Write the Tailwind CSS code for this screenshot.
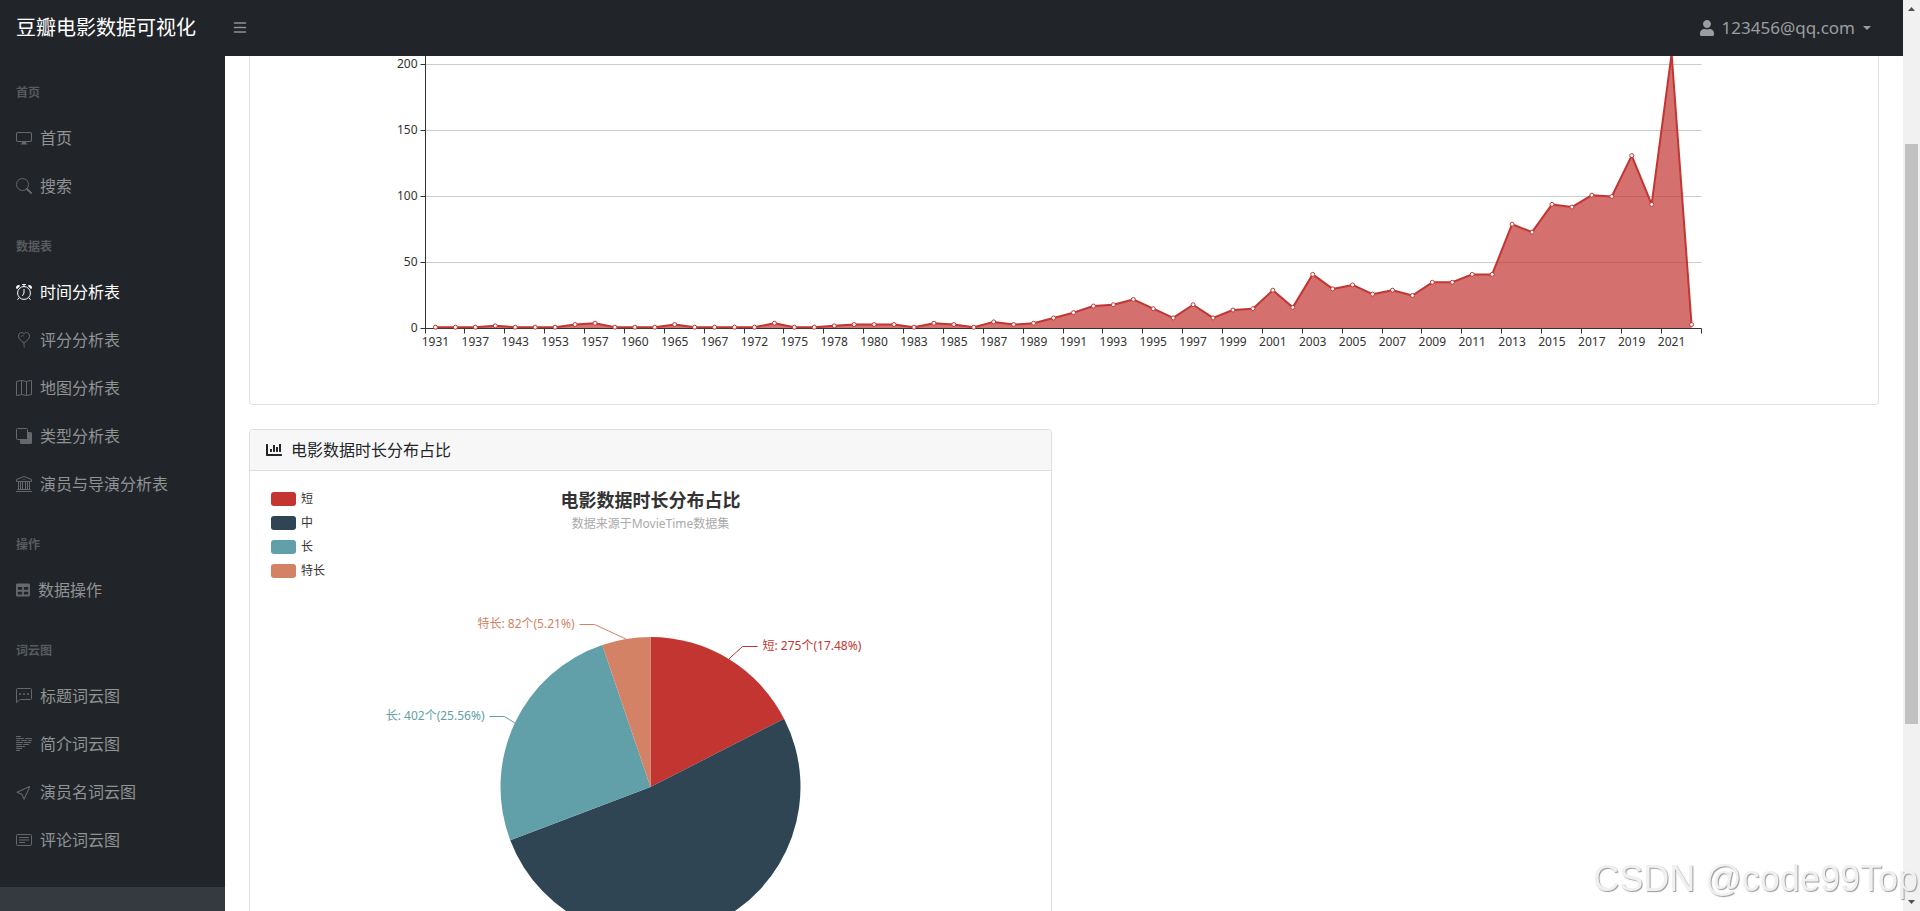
<!DOCTYPE html>
<html lang="zh-CN">
<head>
  <meta charset="UTF-8" />
  <meta name="viewport" content="width=device-width, initial-scale=1.0" />
  <title>豆瓣电影数据可视化</title>
  <script src="https://cdn.jsdelivr.net/npm/@tailwindcss/browser@4"></script>
</head>
<body class="flex h-screen overflow-hidden bg-white font-['Noto_Sans','Noto_Sans_CJK_SC',sans-serif] text-base text-[#212529]">

  <div class="flex min-w-0 flex-1 flex-col">
    <!-- Top navbar -->
    <header class="flex h-14 shrink-0 items-center bg-[#212529]">
      <a href="#" class="w-[225px] shrink-0 pl-4 text-xl leading-6 text-white">豆瓣电影数据可视化</a>
      <button type="button" aria-label="切换菜单" class="ml-2 text-[#909294]">
        <svg class="h-4 w-[14px]" viewBox="0 0 14 16" fill="none" stroke="currentColor" stroke-width="1.6" stroke-linecap="round"><path d="M1.5 3h11M1.5 7.500h11M1.5 12h11" /></svg>
      </button>
      <button type="button" class="mr-8 ml-auto flex items-center text-[17px] text-[#9b9d9f]">
        <svg class="mr-2 h-4 w-[14px]" viewBox="0 0 448 512" fill="currentColor"><path d="M224 256c70.700 0 128-57.300 128-128S294.700 0 224 0 96 57.300 96 128s57.300 128 128 128zm89.600 32h-16.700c-22.200 10.200-46.900 16-72.900 16s-50.600-5.800-72.900-16h-16.700C60.200 288 0 348.200 0 422.400V464c0 26.500 21.500 48 48 48h352c26.500 0 48-21.500 48-48v-41.600c0-74.200-60.200-134.400-134.400-134.400z" /></svg>
        <span>123456@qq.com</span>
        <svg class="ml-2 h-1 w-2" viewBox="0 0 8 4" fill="currentColor"><path d="M0 0h8L4 4z" /></svg>
      </button>
    </header>

    <div class="flex min-h-0 flex-1">
      <!-- Sidebar -->
      <aside class="flex w-[225px] shrink-0 flex-col bg-[#212529] text-[#909294]">
        <nav class="min-h-0 flex-1 overflow-hidden">
          <h2 class="px-4 pt-7 pb-3 text-xs leading-[18px] font-bold text-[#585b5e]">首页</h2>
          <a href="#" class="flex items-center px-4 py-3">
            <svg class="mr-2 size-4 text-[#66696c]" viewBox="0 0 16 16" fill="currentColor"><path d="M0 4s0-2 2-2h12s2 0 2 2v6s0 2-2 2h-4q0 1 .25 1.500H11a.5.5 0 0 1 0 1H5a.5.5 0 0 1 0-1h.75Q6 13 6 12H2s-2 0-2-2zm1.398-.855a.76.76 0 0 0-.254.302A1.500 1.500 0 0 0 1 4.010V10c0 .325.078.502.145.602q.105.156.302.254a1.500 1.500 0 0 0 .538.143L2.010 11H14c.325 0 .502-.078.602-.145a.76.76 0 0 0 .254-.302 1.500 1.500 0 0 0 .143-.538L15 9.990V4c0-.325-.078-.502-.145-.602a.76.76 0 0 0-.302-.254A1.500 1.500 0 0 0 13.990 3H2c-.325 0-.502.078-.602.145" /></svg>
            首页
          </a>
          <a href="#" class="flex items-center px-4 py-3">
            <svg class="mr-2 size-4 text-[#66696c]" viewBox="0 0 16 16" fill="none" stroke="currentColor"><circle cx="6.500" cy="6.500" r="6" /><path d="M11 11l4.200 4.200" stroke-width="1.900" stroke-linecap="round" /></svg>
            搜索
          </a>

          <h2 class="px-4 pt-7 pb-3 text-xs leading-[18px] font-bold text-[#585b5e]">数据表</h2>
          <a href="#" class="flex items-center px-4 py-3 text-white" aria-current="page">
            <svg class="mr-2 size-4" viewBox="0 0 16 16" fill="none" stroke="currentColor"><circle cx="8" cy="9" r="6.400" /><path d="M8 5.500V9l-1.400 2.500M6.500.6h3M8 .6v2M3 14l-1.300 1.500M13 14l1.300 1.500" stroke-linecap="round" /><path d="M.9 5.200A2.400 2.400 0 0 1 4.300 1.800zM15.100 5.200A2.400 2.400 0 0 0 11.700 1.800z" fill="currentColor" stroke="none" /></svg>
            时间分析表
          </a>
          <a href="#" class="flex items-center px-4 py-3">
            <svg class="mr-2 size-4 text-[#66696c]" viewBox="0 0 16 16" fill="none" stroke="currentColor"><path d="M8 11C4.500 8.500 2.500 6.500 2.500 4.200 2.500.5 6.200-.5 8 1.800 9.800-.5 13.500.5 13.500 4.200 13.500 6.500 11.500 8.500 8 11zM8 11v1.500c0 1.500.5 1.500.2 3" /><path d="M8 4.300C7 2.800 5 3.500 5.200 5" stroke-width=".7" /></svg>
            评分分析表
          </a>
          <a href="#" class="flex items-center px-4 py-3">
            <svg class="mr-2 size-4 text-[#66696c]" viewBox="0 0 16 16" fill="none" stroke="currentColor"><path d="M.5 1.400l5-.9 5 .9 5-.9v14.100l-5 .9-5-.9-5 .9zM5.500.5v14.100M10.500 1.400v14.100" /></svg>
            地图分析表
          </a>
          <a href="#" class="flex items-center px-4 py-3">
            <svg class="mr-2 size-4 text-[#66696c]" viewBox="0 0 16 16"><rect x="4" y="4" width="12" height="12" rx="1.500" fill="currentColor" /><rect x=".5" y=".5" width="11" height="11" rx="1" fill="#212529" stroke="currentColor" /></svg>
            类型分析表
          </a>
          <a href="#" class="flex items-center px-4 py-3">
            <svg class="mr-2 size-4 text-[#66696c]" viewBox="0 0 16 16" fill="none" stroke="currentColor"><path d="M.5 5.500V3.500L8 .5l7.500 3v2zM1.500 13.500h13M0 15.500h16M2.500 6v7M4.500 6v7M6.500 6v7M9.500 6v7M11.500 6v7M13.500 6v7M7.500 3.500h1" /></svg>
            演员与导演分析表
          </a>

          <h2 class="px-4 pt-7 pb-3 text-xs leading-[18px] font-bold text-[#585b5e]">操作</h2>
          <a href="#" class="flex items-center px-4 py-3">
            <svg class="mr-2 h-4 w-[14px] text-[#66696c]" viewBox="0 0 512 512" preserveAspectRatio="none" fill="currentColor"><path d="M464 48H48C21.500 48 0 69.500 0 96v320c0 26.500 21.500 48 48 48h416c26.500 0 48-21.500 48-48V96c0-26.500-21.500-48-48-48zM224 400H64v-88h160zm0-152H64v-88h160zm224 152H288v-88h160zm0-152H288v-88h160z" /></svg>
            数据操作
          </a>

          <h2 class="px-4 pt-7 pb-3 text-xs leading-[18px] font-bold text-[#585b5e]">词云图</h2>
          <a href="#" class="flex items-center px-4 py-3">
            <svg class="mr-2 size-4 text-[#66696c]" viewBox="0 0 16 16" fill="none" stroke="currentColor"><path d="M1.500.5h13a1 1 0 0 1 1 1v9a1 1 0 0 1-1 1H4.400a1.500 1.500 0 0 0-1 .4L.5 14.600V1.500a1 1 0 0 1 1-1z" /><path d="M4 6h.01M8 6h.01M12 6h.01" stroke-width="2" stroke-linecap="round" /></svg>
            标题词云图
          </a>
          <a href="#" class="flex items-center px-4 py-3">
            <svg class="mr-2 size-4 text-[#66696c]" viewBox="0 0 16 16" fill="none" stroke="currentColor" stroke-linecap="round"><path d="M.5.5h4M.5 2.500h7M9.500 2.500h6M.5 4.500h3M5.500 4.500h5M12.500 4.500h3M.5 6.500h6M8.500 6.500h6M.5 8.500h5M7.500 8.500h5M.5 10.500h8M.5 12.500h5M.5 14.500h3" /></svg>
            简介词云图
          </a>
          <a href="#" class="flex items-center px-4 py-3">
            <svg class="mr-2 size-4 text-[#66696c]" viewBox="0 0 16 16" fill="currentColor"><path d="M14.082 2.182a.5.5 0 0 1 .103.557L8.528 15.467a.5.5 0 0 1-.917-.007L5.570 10.694.803 8.652a.5.5 0 0 1-.006-.916l12.728-5.657a.5.5 0 0 1 .556.103zM2.250 8.184l3.897 1.670a.5.5 0 0 1 .262.263l1.670 3.897L12.743 3.520z" /></svg>
            演员名词云图
          </a>
          <a href="#" class="flex items-center px-4 py-3">
            <svg class="mr-2 size-4 text-[#66696c]" viewBox="0 0 16 16" fill="none" stroke="currentColor" stroke-linecap="round"><rect x=".5" y="2.500" width="15" height="11" rx="1" /><path d="M3.500 5.500h9M3.500 8h9M3.500 10.500h5" /></svg>
            评论词云图
          </a>
        </nav>
        <div class="h-6 shrink-0 bg-[#343a40]"></div>
      </aside>

      <!-- Content -->
      <main id="content" class="min-w-0 flex-1 overflow-y-auto p-6 [scrollbar-width:none]">
        <section class="mb-6 rounded border border-[#dfdfdf]">
          <h3 class="flex items-center rounded-t border-b border-[#dfdfdf] bg-[#f7f7f7] px-4 py-2">
            <svg class="mr-2 size-4" viewBox="0 0 512 512" fill="currentColor"><path d="M500 384c6.600 0 12 5.400 12 12v40c0 6.600-5.400 12-12 12H12c-6.600 0-12-5.400-12-12V76c0-6.600 5.400-12 12-12h40c6.600 0 12 5.400 12 12v308zM372.700 159.500L288 216l-85.300-113.700c-5.100-6.800-15.500-6.300-19.900 1L96 248v104h384l-89.900-187.800c-3.200-6.500-11.400-8.700-17.400-4.700z" /></svg>
            电影数据时间分布
          </h3>
          <div class="p-4">
            <div id="yearChart" class="h-[450px] overflow-hidden"></div>
          </div>
        </section>

        <div class="grid grid-cols-2 gap-6">
          <section class="rounded border border-[#dfdfdf]">
            <h3 class="flex items-center rounded-t border-b border-[#dfdfdf] bg-[#f7f7f7] px-4 py-2">
              <svg class="mr-[9px] size-4" viewBox="0 0 512 512" fill="currentColor"><path d="M332.800 320h38.400c6.400 0 12.800-6.400 12.800-12.800V172.800c0-6.400-6.400-12.800-12.800-12.800h-38.400c-6.400 0-12.800 6.400-12.800 12.800v134.400c0 6.400 6.400 12.800 12.800 12.800zm96 0h38.400c6.400 0 12.800-6.400 12.800-12.800V76.800c0-6.400-6.400-12.800-12.800-12.800h-38.400c-6.400 0-12.800 6.400-12.800 12.800v230.400c0 6.400 6.400 12.800 12.800 12.800zm-288 0h38.400c6.400 0 12.800-6.400 12.800-12.800v-70.400c0-6.400-6.400-12.800-12.800-12.800h-38.400c-6.400 0-12.800 6.400-12.800 12.800v70.400c0 6.400 6.400 12.800 12.800 12.800zm96 0h38.400c6.400 0 12.800-6.400 12.800-12.800V108.800c0-6.400-6.400-12.800-12.800-12.800h-38.400c-6.400 0-12.800 6.400-12.800 12.800v198.400c0 6.400 6.400 12.800 12.800 12.800zM496 384H64V80c0-8.840-7.160-16-16-16H16C7.160 64 0 71.160 0 80v336c0 17.670 14.330 32 32 32h464c8.840 0 16-7.160 16-16v-32c0-8.840-7.160-16-16-16z" /></svg>
              电影数据时长分布占比
            </h3>
            <div class="p-4">
              <div class="relative h-[600px]">
                <div id="pieChart" class="h-full overflow-hidden"></div>
                <ul class="absolute top-[5px] left-[5px] space-y-[10px] text-xs leading-[14px] text-[#333]">
                  <li class="flex items-center gap-[5px]"><span class="h-[14px] w-[25px] rounded-[3px] bg-[#c23531]"></span>短</li>
                  <li class="flex items-center gap-[5px]"><span class="h-[14px] w-[25px] rounded-[3px] bg-[#2f4554]"></span>中</li>
                  <li class="flex items-center gap-[5px]"><span class="h-[14px] w-[25px] rounded-[3px] bg-[#61a0a8]"></span>长</li>
                  <li class="flex items-center gap-[5px]"><span class="h-[14px] w-[25px] rounded-[3px] bg-[#d48265]"></span>特长</li>
                </ul>
                <div class="absolute inset-x-0 top-0 text-center">
                  <h4 class="text-lg leading-[26px] font-bold text-[#333]">电影数据时长分布占比</h4>
                  <p class="mt-[2px] text-xs leading-[18px] text-[#aaa]">数据来源于MovieTime数据集</p>
                </div>
              </div>
            </div>
          </section>
        </div>
      </main>
    </div>
  </div>

  <!-- Scrollbar -->
  <div class="flex w-[17px] shrink-0 flex-col items-center bg-[#f1f1f1] text-[#505050]" aria-hidden="true">
    <svg class="size-[17px] shrink-0" viewBox="0 0 17 17" fill="currentColor"><path d="M5 11h7L8.500 7z" /></svg>
    <div class="flex w-full flex-1 flex-col px-[2px]">
      <div class="basis-[127px]"></div>
      <div class="basis-[580px] bg-[#c1c1c1]"></div>
    </div>
    <svg class="size-[17px] shrink-0" viewBox="0 0 17 17" fill="currentColor"><path d="M5 6h7L8.500 10z" /></svg>
  </div>

  <div class="pointer-events-none fixed right-[2px] bottom-3 font-['Liberation_Sans',sans-serif] text-[36px] leading-10 text-[#f0f0f0] [text-shadow:1px_1px_1px_#999]">CSDN @code99Top</div>

  <script>
    // --- Year line chart ---
    const labels = [1931, 1937, 1943, 1953, 1957, 1960, 1965, 1967, 1972, 1975, 1978, 1980, 1983, 1985, 1987, 1989,
      1991, 1993, 1995, 1997, 1999, 2001, 2003, 2005, 2007, 2009, 2011, 2013, 2015, 2017, 2019, 2021];
    const counts = [1, 1, 1, 2, 1, 1, 1, 3, 4, 1, 1, 1, 3, 1, 1, 1, 1, 4, 1, 1, 2, 3, 3, 3, 1, 4, 3, 1, 5, 3, 4, 8,
      12, 17, 18, 22, 15, 8, 18, 8, 14, 15, 29, 16, 41, 30, 33, 26, 29, 25, 35, 35, 41, 41, 79, 73, 94, 92, 101, 100, 131, 94, 208, 3];

    function drawYearChart() {
      const el = document.getElementById("yearChart");
      const w = el.clientWidth, h = 450;
      const left = Math.round(w * 0.1) - 0.5, right = Math.round(w * 0.9) - 0.5;
      const base = h - 59.5;
      const band = (right - left) / counts.length;
      const x = (i) => left + band * (i + 0.5);
      const y = (v) => base - v * 1.32;
      let svg = `<svg width="${w}" height="${h}" font-size="12" fill="#333">`;

      for (let v = 0; v <= 250; v += 50) {
        if (v > 0) svg += `<path d="M${left} ${y(v)}H${right}" stroke="#ccc" />`;
        svg += `<path d="M${left - 5} ${y(v)}H${left}" stroke="#333" />`;
        svg += `<text x="${left - 8}" y="${y(v) + 3}" text-anchor="end">${v}</text>`;
      }

      const points = counts.map((v, i) => `${x(i)},${y(v)}`);
      svg += `<polygon points="${x(0)},${base} ${points.join(" ")} ${x(counts.length - 1)},${base}" fill="#c23531" fill-opacity="0.7" />`;
      svg += `<path d="M${left} ${y(250)}V${base}H${right}" fill="none" stroke="#333" />`;
      labels.forEach((label, i) => {
        const tick = Math.round(left + band * i * 2) - 0.5;
        svg += `<path d="M${i ? tick : left} ${base}v5" stroke="#333" />`;
        svg += `<text x="${x(i * 2)}" y="${base + 17}" text-anchor="middle">${label}</text>`;
      });
      svg += `<path d="M${right} ${base}v5" stroke="#333" />`;
      svg += `<polyline points="${points.join(" ")}" fill="none" stroke="#c23531" stroke-width="2" stroke-linejoin="bevel" />`;
      counts.forEach((v, i) => {
        svg += `<circle cx="${x(i)}" cy="${y(v)}" r="2" fill="#fff" stroke="#c23531" />`;
      });
      el.innerHTML = svg + "</svg>";
    }

    // --- Duration pie chart ---
    // elbow: offset of the label line's bend from the pie centre
    const slices = [
      { name: "短", value: 275, color: "#c23531", elbow: [92, -140] },
      { name: "中", value: 814, color: "#2f4554", elbow: [67, 151] },
      { name: "长", value: 402, color: "#61a0a8", elbow: [-146, -70] },
      { name: "特长", value: 82, color: "#d48265", elbow: [-56, -162] },
    ];

    function drawPieChart() {
      const el = document.getElementById("pieChart");
      const w = el.clientWidth, h = 600, r = 150;
      const cx = w / 2, cy = h / 2;
      const total = slices.reduce((sum, s) => sum + s.value, 0);
      const at = (t) => [cx + r * Math.sin(t * 2 * Math.PI), cy - r * Math.cos(t * 2 * Math.PI)];
      let svg = `<svg width="${w}" height="${h}" font-size="12">`;
      let start = 0;
      for (const s of slices) {
        const share = s.value / total;
        const large = share > 0.5 ? 1 : 0;
        svg += `<path d="M${cx} ${cy}L${at(start)}A${r} ${r} 0 ${large} 1 ${at(start + share)}Z" fill="${s.color}" />`;
        const dir = s.elbow[0] > 0 ? 1 : -1;
        const ex = cx + s.elbow[0], ey = cy + s.elbow[1] - 0.5;
        svg += `<polyline points="${at(start + share / 2)} ${ex},${ey} ${ex + dir * 15},${ey}" fill="none" stroke="${s.color}" />`;
        svg += `<text x="${ex + dir * 20}" y="${ey + 3}" text-anchor="${dir > 0 ? "start" : "end"}" fill="${s.color}">${s.name}: ${s.value}个(${(share * 100).toFixed(2)}%)</text>`;
        start += share;
      }
      el.innerHTML = svg + "</svg>";
    }

    // --- Redraw whenever the content area changes size ---
    const content = document.getElementById("content");
    new ResizeObserver(() => {
      drawYearChart();
      drawPieChart();
      content.scrollTop = 200;
    }).observe(content);
  </script>
</body>
</html>
